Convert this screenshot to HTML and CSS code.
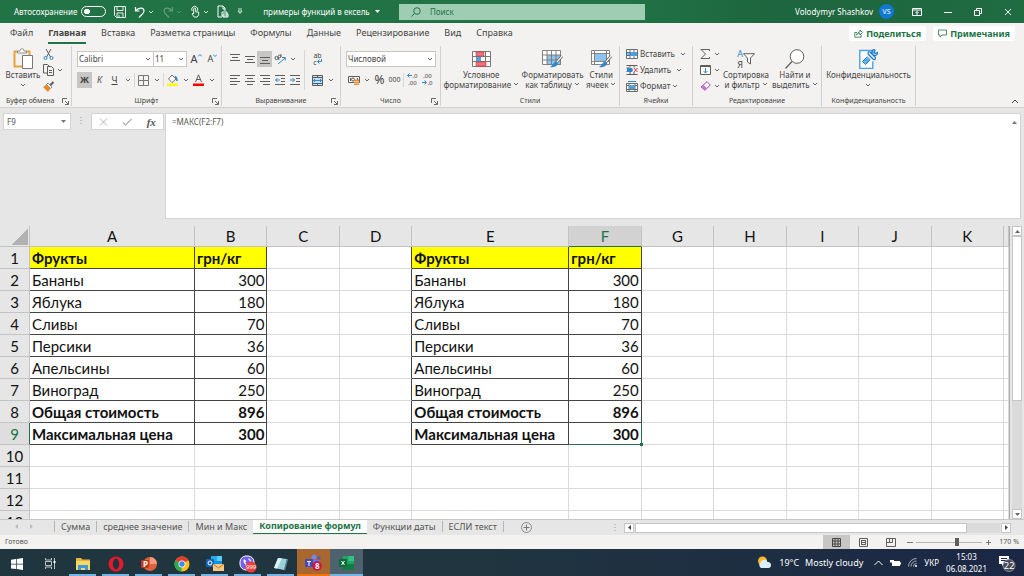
FILE: index.html
```html
<!DOCTYPE html>
<html lang="ru">
<head>
  <meta charset="UTF-8">
  <meta name="viewport" content="width=device-width, initial-scale=1.0">
  <title>примеры функций в ексель</title>
  <link rel="stylesheet" href="styles.css">
</head>
<body>
  <!-- Shared icons -->
  <svg class="defs" aria-hidden="true">
    <symbol id="chev" viewBox="0 0 6 4"><path d="M1 1l2 2 2-2" fill="none" stroke="currentColor"/></symbol>
    <symbol id="launch" viewBox="0 0 7 7"><path d="M.5 5V.5H5M3 3l3 3M6.500 3v3.500H3" fill="none" stroke="currentColor" stroke-width=".8"/></symbol>
    <symbol id="brush" viewBox="0 0 12 12"><path d="M11 1L6 7" stroke="#605e5c" stroke-width="2.600"/><path d="M11 1L6 7" stroke="#fff" stroke-width="1.200"/><path d="M6 6c-3 0-3 4-6 5 4 1 8-1 7-4z" fill="#2f87cf"/></symbol>
  </svg>

  <!-- Title bar -->
  <header class="titlebar">
    <div class="quick">
      <label for="autosave">Автосохранение</label>
      <input type="checkbox" id="autosave" class="switch">
      <button aria-label="Сохранить"><svg width="12" height="12" viewBox="0 0 12 12"><path d="M.5.5h11v11h-9l-2-2zM3 .5v4h6v-4M3 11V7h6v4M5 9v2" fill="none" stroke="#fff" stroke-width=".9"/></svg></button>
      <button aria-label="Отменить"><svg width="12" height="12" viewBox="0 0 12 12"><path d="M1.500 1v4h4M1.500 5C5 1 10 1.500 10 5c0 3-3 4-5 6.500" fill="none" stroke="#fff" stroke-width="1.200"/></svg><svg class="chev"><use href="#chev"/></svg></button>
      <button class="off" aria-label="Повторить"><svg width="12" height="12" viewBox="0 0 12 12"><path d="M10.500 1v4h-4M10.500 5C7 1 2 1.500 2 5c0 3 3 4 5 6.500" fill="none" stroke="#fff" stroke-width="1.200"/></svg><svg class="chev"><use href="#chev"/></svg></button>
      <button aria-label="Режим касания"><svg width="11" height="13" viewBox="0 0 11 13"><path d="M2.200 6a3 3 0 1 1 5 0M3.700 9V4a1 1 0 0 1 2 0v3h3v3l-1.500 2h-3L2 9l1-1z" fill="none" stroke="#fff" stroke-width=".9"/></svg><svg class="chev"><use href="#chev"/></svg></button>
      <button aria-label="Печать"><svg width="12" height="13" viewBox="0 0 12 13"><path d="M5 12H1V1h5l2 2v3M6 1v3h2M5 7h5v4H5zM6 9h5v3H6z" fill="none" stroke="#fff"/></svg></button>
      <button aria-label="Настроить панель"><svg width="6" height="7" viewBox="0 0 6 7"><path d="M1 1h4M1 3h4L3 5.500z" fill="none" stroke="#fff" stroke-width=".8"/></svg></button>
    </div>
    <button class="doc-name">примеры функций в ексель <svg width="5" height="3" viewBox="0 0 5 3"><path d="M0 0h5L2.500 3z" fill="#fff"/></svg></button>
    <label class="search">
      <svg width="10" height="10" viewBox="0 0 10 10"><circle cx="6" cy="4" r="3.300" fill="none" stroke="#217346"/><path d="M3.500 6.500L.5 9.500" stroke="#217346"/></svg>
      <input type="text" placeholder="Поиск" aria-label="Поиск">
    </label>
    <div class="account">
      <span>Volodymyr Shashkov</span>
      <span class="avatar">VS</span>
      <button aria-label="Параметры ленты"><svg width="10" height="8" viewBox="0 0 10 8"><path d="M.5.5h9v7h-9zM1 2h8M5 7V3.500M3.500 5L5 3.500 6.500 5" fill="none" stroke="#fff"/></svg></button>
      <button aria-label="Свернуть"><svg width="8" height="8" viewBox="0 0 8 8"><path d="M0 4.500h8" stroke="#fff"/></svg></button>
      <button aria-label="Развернуть"><svg width="8" height="8" viewBox="0 0 8 8"><path d="M.5 2.500h5v5h-5zM2.500 2V.5h5v5H6" fill="none" stroke="#fff"/></svg></button>
      <button aria-label="Закрыть"><svg width="8" height="8" viewBox="0 0 8 8"><path d="M1 1l6 6M7 1L1 7" stroke="#fff"/></svg></button>
    </div>
  </header>

  <!-- Ribbon tabs -->
  <nav class="menu">
    <button>Файл</button>
    <button class="current">Главная</button>
    <button>Вставка</button>
    <button>Разметка страницы</button>
    <button>Формулы</button>
    <button>Данные</button>
    <button>Рецензирование</button>
    <button>Вид</button>
    <button>Справка</button>
    <div class="menu-right">
      <button class="pill"><svg width="9" height="9" viewBox="0 0 9 9"><path d="M3 3.500H.8v4.700h6.400V6M2.500 6c.5-2 2-3 3.500-3V1l2.500 2.500L6 6V4.500C4.500 4.500 3.500 5 2.500 6z" fill="none" stroke="#217346" stroke-width=".8"/></svg>Поделиться</button>
      <button class="pill"><svg width="9" height="9" viewBox="0 0 9 9"><path d="M.5 1h8v5H4L2 8V6H.5z" fill="none" stroke="#217346" stroke-width=".8"/></svg>Примечания</button>
    </div>
  </nav>

  <!-- Ribbon -->
  <section class="ribbon">
    <div class="group clipboard">
      <div class="group-body">
        <button class="big">
          <span class="pic"><svg width="20" height="21" viewBox="0 0 20 21"><path d="M5 3.500H1.500v15H9M13 3.500h3.500V7" fill="none" stroke="#e8a33d" stroke-width="2"/><path d="M4.500 5V3h2.500c0-3 4-3 4 0h2.500v2z" fill="#fff" stroke="#797775" stroke-width=".8"/><path d="M9.500 7.500h10v13h-10z" fill="#fff" stroke="#797775"/></svg></span>
          <span>Вставить</span>
          <svg class="chev"><use href="#chev"/></svg>
        </button>
        <div class="stack">
          <button aria-label="Вырезать"><svg width="11" height="11" viewBox="0 0 11 11"><path d="M3 0l4.500 8M8 0L3.500 8" stroke="#605e5c" fill="none"/><circle cx="2.500" cy="9" r="1.500" fill="none" stroke="#2f87cf"/><circle cx="8.500" cy="9" r="1.500" fill="none" stroke="#2f87cf"/></svg></button>
          <button aria-label="Копировать"><svg width="11" height="12" viewBox="0 0 11 12"><path d="M4 9H.5V.5h4L6 2M4.500 2.500h4l2 2v7h-6zM6 6.500h3M6 8.500h3" fill="none" stroke="#605e5c"/></svg><svg class="chev"><use href="#chev"/></svg></button>
          <button aria-label="Формат по образцу"><svg width="11" height="11" viewBox="0 0 11 11"><path d="M10.500 1L7 4.500" stroke="#605e5c" stroke-width="2"/><path d="M5 2l4 4-1.500 1.500-4-4z" fill="#fff" stroke="#605e5c" stroke-width=".7"/><path d="M3.500 3.500l4 4L5 11 0 6z" fill="#e98b2c"/></svg></button>
        </div>
      </div>
      <div class="group-foot"><span>Буфер обмена</span><button class="launch" aria-label="Буфер обмена"><svg width="7" height="7"><use href="#launch"/></svg></button></div>
    </div>

    <div class="group font">
      <div class="group-body rows">
        <div class="row">
          <span class="combo combo-font"><select aria-label="Шрифт"><option>Calibri</option></select><svg class="chev"><use href="#chev"/></svg></span>
          <span class="combo combo-size"><select aria-label="Размер"><option>11</option></select><svg class="chev"><use href="#chev"/></svg></span>
          <button class="ib grow" aria-label="Увеличить шрифт">A<svg width="4" height="3" viewBox="0 0 4 3"><path d="M0 2.500l2-2 2 2" fill="none" stroke="#2f87cf"/></svg></button>
          <button class="ib shrink" aria-label="Уменьшить шрифт">A<svg width="4" height="3" viewBox="0 0 4 3"><path d="M0 .5l2 2 2-2" fill="none" stroke="#2f87cf"/></svg></button>
        </div>
        <div class="row">
          <button class="ib on"><b>Ж</b></button>
          <button class="ib"><i>К</i></button>
          <button class="ib"><u>Ч</u></button>
          <button class="drop" aria-label="Подчёркивание"><svg class="chev"><use href="#chev"/></svg></button>
          <span class="sep"></span>
          <button class="ib" aria-label="Границы"><svg width="11" height="11" viewBox="0 0 11 11"><path d="M.5.5h10v10H.5zM5.500.5v10M.5 5.500h10" fill="none" stroke="#797775"/></svg></button>
          <button class="drop" aria-label="Границы"><svg class="chev"><use href="#chev"/></svg></button>
          <span class="sep"></span>
          <button class="ib" aria-label="Цвет заливки"><svg width="12" height="12" viewBox="0 0 12 12"><path d="M5 1l4 4-4 3.500L1.500 5z" fill="#fff" stroke="#605e5c" stroke-width=".9"/><path d="M8 2.500c2 1 2 3 2 4.500" stroke="#2f87cf" stroke-width="1.500" fill="none"/><path d="M0 9.500h11V12H0z" fill="#ff0"/></svg></button>
          <button class="drop" aria-label="Цвет заливки"><svg class="chev"><use href="#chev"/></svg></button>
          <button class="ib" aria-label="Цвет шрифта"><svg width="12" height="12" viewBox="0 0 12 12"><path d="M2.500 8L5.500.8 8.500 8M3.500 5.500h4" fill="none" stroke="#605e5c"/><path d="M0 9.500h11V12H0z" fill="#f00"/></svg></button>
          <button class="drop" aria-label="Цвет шрифта"><svg class="chev"><use href="#chev"/></svg></button>
        </div>
      </div>
      <div class="group-foot"><span>Шрифт</span><button class="launch" aria-label="Шрифт"><svg width="7" height="7"><use href="#launch"/></svg></button></div>
    </div>

    <div class="group align">
      <div class="group-body">
        <div class="rows">
          <div class="row">
            <button class="ib" aria-label="По верхнему краю"><svg width="10" height="10" viewBox="0 0 10 10"><path d="M0 .5h10M2 3.500h6M0 6.500h10" stroke="#605e5c"/></svg></button>
            <button class="ib" aria-label="По середине"><svg width="10" height="10" viewBox="0 0 10 10"><path d="M0 2.500h10M2 5.500h6M0 8.500h10" stroke="#605e5c"/></svg></button>
            <button class="ib on" aria-label="По нижнему краю"><svg width="10" height="10" viewBox="0 0 10 10"><path d="M0 3.500h10M2 6.500h6M0 9.500h10" stroke="#605e5c"/></svg></button>
            <button class="ib" aria-label="Ориентация"><svg width="12" height="11" viewBox="0 0 12 11"><circle cx="2.500" cy="4" r="1.600" fill="none" stroke="#605e5c"/><circle cx="5.500" cy="2.500" r="1.400" fill="none" stroke="#605e5c"/><path d="M4 3l1 3M7 0v3" stroke="#605e5c"/><path d="M4 10l7-6M8 3.500h3.200v3" fill="none" stroke="#2f87cf"/></svg></button>
            <button class="drop" aria-label="Ориентация"><svg class="chev"><use href="#chev"/></svg></button>
          </div>
          <div class="row">
            <button class="ib" aria-label="По левому краю"><svg width="10" height="10" viewBox="0 0 10 10"><path d="M0 .5h10M0 3.500h7M0 6.500h10M0 9.500h7" stroke="#605e5c"/></svg></button>
            <button class="ib" aria-label="По центру"><svg width="10" height="10" viewBox="0 0 10 10"><path d="M0 .5h10M2 3.500h6M0 6.500h10M2 9.500h6" stroke="#605e5c"/></svg></button>
            <button class="ib" aria-label="По правому краю"><svg width="10" height="10" viewBox="0 0 10 10"><path d="M0 .5h10M3 3.500h7M0 6.500h10M3 9.500h7" stroke="#605e5c"/></svg></button>
            <button class="ib" aria-label="Уменьшить отступ"><svg width="10" height="10" viewBox="0 0 10 10"><path d="M0 .5h10M6 3.500h4M6 6.500h4M0 9.500h10" stroke="#605e5c"/><path d="M5 5H.5M2.500 3L.5 5l2 2" fill="none" stroke="#2f87cf"/></svg></button>
            <button class="ib" aria-label="Увеличить отступ"><svg width="10" height="10" viewBox="0 0 10 10"><path d="M0 .5h10M6 3.500h4M6 6.500h4M0 9.500h10" stroke="#605e5c"/><path d="M0 5h4.500M2.500 3l2 2-2 2" fill="none" stroke="#2f87cf"/></svg></button>
          </div>
        </div>
        <span class="sep tall"></span>
        <div class="rows">
          <div class="row">
            <button class="ib wrap" aria-label="Переносить текст"><span>ab</span><span>c<svg width="5" height="5" viewBox="0 0 5 5"><path d="M4.500 0v2.500H.5M2.500.5l-2 2 2 2" fill="none" stroke="#2f87cf"/></svg></span></button>
          </div>
          <div class="row">
            <button class="ib" aria-label="Объединить"><svg width="11" height="11" viewBox="0 0 11 11"><path d="M.5.5h10v10H.5z" fill="#bfe0f7" stroke="#605e5c"/><path d="M.5 2.500h10M.5 8.500h10M5.500.5v2M5.500 8.500v2" stroke="#605e5c"/><path d="M1.500 5.500h8M3 4L1.500 5.500 3 7M8 4l1.500 1.500L8 7" fill="none" stroke="#2f87cf"/></svg></button>
            <button class="drop" aria-label="Объединить"><svg class="chev"><use href="#chev"/></svg></button>
          </div>
        </div>
      </div>
      <div class="group-foot"><span>Выравнивание</span><button class="launch" aria-label="Выравнивание"><svg width="7" height="7"><use href="#launch"/></svg></button></div>
    </div>

    <div class="group number">
      <div class="group-body rows">
        <div class="row">
          <span class="combo combo-number"><select aria-label="Числовой формат"><option>Числовой</option></select><svg class="chev"><use href="#chev"/></svg></span>
        </div>
        <div class="row">
          <button class="ib" aria-label="Финансовый формат"><svg width="12" height="11" viewBox="0 0 12 11"><path d="M.5 1.500h11v6H.5z" fill="none" stroke="#605e5c"/><circle cx="5" cy="4.500" r="1.500" fill="none" stroke="#605e5c"/><path d="M2.500 3v3M9.500 3v3" stroke="#605e5c"/><path d="M6 4.500h5V10H6z" fill="#e98b2c"/><path d="M6 6.500h5M6 8.500h5" stroke="#fff" stroke-width=".5"/></svg></button>
          <button class="drop" aria-label="Финансовый формат"><svg class="chev"><use href="#chev"/></svg></button>
          <button class="ib percent">%</button>
          <button class="ib zeros">000</button>
          <span class="sep"></span>
          <button class="ib decimals" aria-label="Увеличить разрядность"><span><svg width="5" height="5" viewBox="0 0 5 5"><path d="M5 2.500H.5M2.500.5l-2 2 2 2" fill="none" stroke="#2f87cf"/></svg>,0</span><span>,00</span></button>
          <button class="ib decimals" aria-label="Уменьшить разрядность"><span>,00</span><span><svg width="5" height="5" viewBox="0 0 5 5"><path d="M0 2.500h4.500M2.500.5l2 2-2 2" fill="none" stroke="#2f87cf"/></svg>,0</span></button>
        </div>
      </div>
      <div class="group-foot"><span>Число</span><button class="launch" aria-label="Число"><svg width="7" height="7"><use href="#launch"/></svg></button></div>
    </div>

    <div class="group styles">
      <div class="group-body spread">
        <button class="big">
          <span class="pic"><svg width="19" height="16" viewBox="0 0 19 16"><path d="M.5.5h18v15H.5zM.5 5.500h18M.5 10.500h18M4.500.5v15M13.500.5v15" fill="#fff" stroke="#797775"/><path d="M4 1h8v4H4zM4 11h10v4H4z" fill="#f4737b" stroke="#d13438" stroke-width=".6"/><path d="M4 6h5v4H4z" fill="#4ba0e0"/></svg></span>
          <span>Условное</span>
          <span>форматирование <svg class="chev"><use href="#chev"/></svg></span>
        </button>
        <button class="big">
          <span class="pic"><svg width="21" height="18" viewBox="0 0 21 18"><path d="M.5.5h18v14H.5z" fill="#fff"/><path d="M5 5h14v10H5z" fill="#8cc4ee"/><path d="M.5.5h18v14H.5zM.5 5h18M.5 10h18M5 .5v14M9.500.5v14M14 .5v14" fill="none" stroke="#797775" stroke-width=".9"/><use href="#brush" x="8" y="5" width="13" height="13"/></svg></span>
          <span>Форматировать</span>
          <span>как таблицу <svg class="chev"><use href="#chev"/></svg></span>
        </button>
        <button class="big">
          <span class="pic"><svg width="21" height="18" viewBox="0 0 21 18"><path d="M.5.5h18v14H.5z" fill="#fff"/><path d="M4 4h12v7H4z" fill="#8cc4ee"/><path d="M.5.5h18v14H.5zM.5 3.500h18M.5 11.500h18M3.500.5v14M15.500.5v14" fill="none" stroke="#797775" stroke-width=".9"/><use href="#brush" x="8" y="5" width="13" height="13"/></svg></span>
          <span>Стили</span>
          <span>ячеек <svg class="chev"><use href="#chev"/></svg></span>
        </button>
      </div>
      <div class="group-foot"><span>Стили</span></div>
    </div>

    <div class="group cells">
      <div class="group-body list">
        <button><svg width="12" height="10" viewBox="0 0 12 10"><path d="M.5.5h11v9H.5zM.5 3.500h11M.5 6.500h11M4 .5v9M8 .5v9" fill="#fff" stroke="#605e5c" stroke-width=".9"/><path d="M4 3h7v4H4z" fill="#4ba0e0"/><path d="M5 5H0M2 3L0 5l2 2" fill="none" stroke="#1979ca"/></svg>Вставить<svg class="chev far"><use href="#chev"/></svg></button>
        <button><svg width="12" height="10" viewBox="0 0 12 10"><path d="M.5.5h11M.5 9.500h11M.5 3h3M.5 6.500h3M4 .5v2M8 .5v2M4 7v2.500M8 7v2.500" fill="none" stroke="#605e5c"/><path d="M1 3h5l1 2-1 2H1z" fill="#2f87cf"/><path d="M8 3l3.500 4M11.500 3L8 7" stroke="#e03c3c"/></svg>Удалить<svg class="chev far"><use href="#chev"/></svg></button>
        <button><svg width="12" height="11" viewBox="0 0 12 11"><path d="M.5 2.500h11v8H.5zM.5 4.500h11M.5 8.500h11M3 2v9M9 2v9" fill="#fff" stroke="#605e5c" stroke-width=".9"/><path d="M3 4h6v4H3z" fill="#4ba0e0"/><path d="M2 .5h8" stroke="#2f87cf"/></svg>Формат<svg class="chev"><use href="#chev"/></svg></button>
      </div>
      <div class="group-foot"><span>Ячейки</span></div>
    </div>

    <div class="group editing">
      <div class="group-body">
        <div class="list">
          <button aria-label="Сумма"><svg width="11" height="10" viewBox="0 0 11 10"><path d="M9.500 2V.5H1L5.500 5 1 9.500h8.500V8" fill="none" stroke="#605e5c"/></svg><svg class="chev"><use href="#chev"/></svg></button>
          <button aria-label="Заполнить"><svg width="11" height="10" viewBox="0 0 11 10"><path d="M.5.5h10v9H.5zM.5 1.500h10" fill="#fff" stroke="#605e5c"/><path d="M5.500 3v5M3.500 6l2 2 2-2" fill="none" stroke="#2f87cf"/></svg><svg class="chev"><use href="#chev"/></svg></button>
          <button aria-label="Очистить"><svg width="11" height="10" viewBox="0 0 11 10"><path d="M7 .7L10.300 4 5 9.300 1 6z" fill="#fff" stroke="#a33fb5"/><path d="M3.500 3.700L7 7.300 5 9.300 1 6z" fill="#c178d0"/></svg><svg class="chev"><use href="#chev"/></svg></button>
        </div>
        <button class="big">
          <span class="pic sort"><span><span class="blue">А</span><span>Я</span></span><svg width="12" height="12" viewBox="0 0 12 12"><path d="M.5.7h11L7.500 5v6l-3-2V5z" fill="#fff" stroke="#605e5c"/></svg></span>
          <span>Сортировка</span>
          <span>и фильтр <svg class="chev"><use href="#chev"/></svg></span>
        </button>
        <button class="big">
          <span class="pic"><svg width="20" height="20" viewBox="0 0 20 20"><circle cx="12" cy="7.500" r="6.800" fill="#fff" stroke="#605e5c"/><path d="M7 12.500L.5 19.500" stroke="#605e5c" stroke-width="1.200"/></svg></span>
          <span>Найти и</span>
          <span>выделить <svg class="chev"><use href="#chev"/></svg></span>
        </button>
      </div>
      <div class="group-foot"><span>Редактирование</span></div>
    </div>

    <div class="group privacy">
      <div class="group-body spread">
        <button class="big">
          <span class="pic"><svg width="19" height="20" viewBox="0 0 19 20"><path d="M.8 1.500h13v18H.8z" fill="#fff" stroke="#4ba0e0" stroke-width="1.400"/><path d="M3.500 12.500l5-5 3 3-5 5z" fill="#8cc4ee" stroke="#1979ca"/><path d="M5 12.500l4-3M6.500 14l3.500-3.500" stroke="#1979ca" stroke-width=".8"/><path d="M8.500 4l7 7" stroke="#f3f2f1" stroke-width="5"/><path d="M9 5l5.500 5.500M11 3l5.500 5.500M9 5c0-2 1-2.500 2-2M14.500 10.500c2 .5 2-1 2-2M13 4.500c-1-3 2-5 3-3l-1 2 1 1 2.300-1c.5 2-1.300 3.500-3.300 2.500" fill="none" stroke="#1979ca" stroke-width="1.200"/></svg></span>
          <span>Конфиденциальность</span>
          <svg class="chev"><use href="#chev"/></svg>
        </button>
      </div>
      <div class="group-foot"><span>Конфиденциальность</span></div>
    </div>
    <button class="collapse" aria-label="Свернуть ленту"><svg width="8" height="5" viewBox="0 0 8 5"><path d="M1 4l3-3 3 3" fill="none" stroke="#444"/></svg></button>
  </section>

  <!-- Formula bar -->
  <section class="formula-bar">
    <span class="name-box"><input type="text" value="F9" aria-label="Имя"><svg width="5" height="3" viewBox="0 0 5 3"><path d="M0 0h5L2.500 3z" fill="#777"/></svg></span>
    <svg class="grip" width="2" height="9" viewBox="0 0 2 9"><path d="M1 0v9" stroke="#999" stroke-dasharray="1 2"/></svg>
    <span class="fx">
      <button aria-label="Отмена"><svg width="9" height="8" viewBox="0 0 9 8"><path d="M1 .5l7 7M8 .5l-7 7" stroke="#b5b5b5"/></svg></button>
      <button aria-label="Ввод"><svg width="10" height="8" viewBox="0 0 10 8"><path d="M1 4.500l2.500 2.500L9.500 1" fill="none" stroke="#b5b5b5" stroke-width="1.300"/></svg></button>
      <button class="fx-btn">fx</button>
    </span>
    <div class="formula">
      <textarea aria-label="Строка формул">=МАКС(F2:F7)</textarea>
      <svg width="5" height="3" viewBox="0 0 5 3"><path d="M0 3h5L2.500 0z" fill="#777"/></svg>
    </div>
  </section>

  <!-- Sheet -->
  <main class="sheet">
    <div class="grid-wrap">
      <table class="grid">
        <colgroup>
          <col class="col-head"><col class="col-a"><col><col><col><col class="col-e"><col><col><col><col><col><col><col class="col-rest">
        </colgroup>
        <thead>
          <tr><th class="corner"></th><th>A</th><th>B</th><th>C</th><th>D</th><th>E</th><th class="sel">F</th><th>G</th><th>H</th><th>I</th><th>J</th><th>K</th><th></th></tr>
        </thead>
        <tbody>
          <tr class="title"><th>1</th><td class="d">Фрукты</td><td class="d">грн/кг</td><td></td><td class="edge"></td><td class="d">Фрукты</td><td class="d">грн/кг</td><td></td><td></td><td></td><td></td><td></td><td></td></tr>
          <tr><th>2</th><td class="d">Бананы</td><td class="d n">300</td><td></td><td class="edge"></td><td class="d">Бананы</td><td class="d n">300</td><td></td><td></td><td></td><td></td><td></td><td></td></tr>
          <tr><th>3</th><td class="d">Яблука</td><td class="d n">180</td><td></td><td class="edge"></td><td class="d">Яблука</td><td class="d n">180</td><td></td><td></td><td></td><td></td><td></td><td></td></tr>
          <tr><th>4</th><td class="d">Сливы</td><td class="d n">70</td><td></td><td class="edge"></td><td class="d">Сливы</td><td class="d n">70</td><td></td><td></td><td></td><td></td><td></td><td></td></tr>
          <tr><th>5</th><td class="d">Персики</td><td class="d n">36</td><td></td><td class="edge"></td><td class="d">Персики</td><td class="d n">36</td><td></td><td></td><td></td><td></td><td></td><td></td></tr>
          <tr><th>6</th><td class="d">Апельсины</td><td class="d n">60</td><td></td><td class="edge"></td><td class="d">Апельсины</td><td class="d n">60</td><td></td><td></td><td></td><td></td><td></td><td></td></tr>
          <tr><th>7</th><td class="d">Виноград</td><td class="d n">250</td><td></td><td class="edge"></td><td class="d">Виноград</td><td class="d n">250</td><td></td><td></td><td></td><td></td><td></td><td></td></tr>
          <tr class="total"><th>8</th><td class="d">Общая стоимость</td><td class="d n">896</td><td></td><td class="edge"></td><td class="d">Общая стоимость</td><td class="d n">896</td><td></td><td></td><td></td><td></td><td></td><td></td></tr>
          <tr class="total"><th class="sel">9</th><td class="d">Максимальная цена</td><td class="d n">300</td><td></td><td class="edge"></td><td class="d">Максимальная цена</td><td class="d n active">300</td><td></td><td></td><td></td><td></td><td></td><td></td></tr>
          <tr><th>10</th><td></td><td></td><td></td><td></td><td></td><td></td><td></td><td></td><td></td><td></td><td></td><td></td></tr>
          <tr><th>11</th><td></td><td></td><td></td><td></td><td></td><td></td><td></td><td></td><td></td><td></td><td></td><td></td></tr>
          <tr><th>12</th><td></td><td></td><td></td><td></td><td></td><td></td><td></td><td></td><td></td><td></td><td></td><td></td></tr>
          <tr><th>13</th><td></td><td></td><td></td><td></td><td></td><td></td><td></td><td></td><td></td><td></td><td></td><td></td></tr>
        </tbody>
      </table>
    </div>
    <div class="vscroll">
      <button aria-label="Вверх"><svg width="5" height="3" viewBox="0 0 5 3"><path d="M0 3h5L2.500 0z" fill="#666"/></svg></button>
      <span class="vthumb"></span>
      <span class="vtrack"></span>
      <button aria-label="Вниз"><svg width="5" height="3" viewBox="0 0 5 3"><path d="M0 0h5L2.500 3z" fill="#666"/></svg></button>
    </div>
  </main>

  <!-- Sheet tabs -->
  <section class="sheet-bar">
    <div class="sheet-nav">
      <svg width="3" height="5" viewBox="0 0 3 5"><path d="M3 0v5L0 2.500z" fill="#bbb"/></svg>
      <svg width="3" height="5" viewBox="0 0 3 5"><path d="M0 0v5l3-2.500z" fill="#bbb"/></svg>
    </div>
    <button class="tab">Сумма</button>
    <button class="tab">среднее значение</button>
    <button class="tab last">Мин и Макс</button>
    <button class="tab open">Копирование формул</button>
    <button class="tab">Функции даты</button>
    <button class="tab">ЕСЛИ текст</button>
    <button class="add" aria-label="Новый лист"><svg width="11" height="11" viewBox="0 0 11 11"><circle cx="5.500" cy="5.500" r="5" fill="none" stroke="#777" stroke-width=".8"/><path d="M5.500 2.500v6M2.500 5.500h6" stroke="#777"/></svg></button>
    <div class="hscroll">
      <svg class="dots" width="2" height="8" viewBox="0 0 2 8"><path d="M1 0v8" stroke="#999" stroke-dasharray="1 2"/></svg>
      <button aria-label="Влево"><svg width="3" height="5" viewBox="0 0 3 5"><path d="M3 0v5L0 2.500z" fill="#444"/></svg></button>
      <span class="hthumb"></span>
      <span class="htrack"></span>
      <button aria-label="Вправо"><svg width="3" height="5" viewBox="0 0 3 5"><path d="M0 0v5l3-2.500z" fill="#444"/></svg></button>
    </div>
  </section>

  <!-- Status bar -->
  <footer class="status">
    <span>Готово</span>
    <div class="view">
      <button class="on" aria-label="Обычный"><svg width="9" height="9" viewBox="0 0 9 9"><path d="M.5.5h8v8h-8zM.5 3h8M.5 6h8M3 .5v8M6 .5v8" fill="none" stroke="#444"/></svg></button>
      <button aria-label="Разметка страницы"><svg width="9" height="9" viewBox="0 0 9 9"><path d="M.5.5h8v8h-8zM2.500 2v5M6.500 2v5M3 2.500h3M3 4.500h3M3 6.500h3" fill="none" stroke="#605e5c"/></svg></button>
      <button aria-label="Страничный"><svg width="10" height="9" viewBox="0 0 10 9"><path d="M.5.5h9v8h-9zM3.500.5v4M6.500.5v4M.5 4.500h6" fill="none" stroke="#605e5c"/></svg></button>
    </div>
    <button class="zoom-btn" aria-label="Уменьшить"><svg width="6" height="6" viewBox="0 0 6 6"><path d="M0 3.500h6" stroke="#777"/></svg></button>
    <input type="range" class="zoom" min="0" max="100" value="63" aria-label="Масштаб">
    <button class="zoom-btn" aria-label="Увеличить"><svg width="5" height="5" viewBox="0 0 5 5"><path d="M0 2.500h5M2.500 0v5" stroke="#777"/></svg></button>
    <span class="zoom-value">170 %</span>
  </footer>

  <!-- Taskbar -->
  <div class="taskbar">
    <button class="task" aria-label="Пуск"><svg width="12" height="12" viewBox="0 0 12 12"><path d="M0 1.700L5 1v4.700H0zM5.700.9L12 0v5.700H5.700zM0 6.400h5v4.700l-5-.7zM5.700 6.400H12V12l-6.300-.9z" fill="#fff"/></svg></button>
    <button class="task" aria-label="Представление задач"><svg width="12" height="11" viewBox="0 0 12 11"><path d="M1.500 0v2h6V0M1.500 11V9h6v2M1.500 3.500h6v4h-6zM10.500 0v11" fill="none" stroke="#ccd3d6" stroke-width=".9"/><path d="M9.500 3h2v2h-2z" fill="#fff"/></svg></button>
    <button class="task run" aria-label="Проводник"><svg width="16" height="14" viewBox="0 0 16 14"><path d="M1 1h5l1.500 1.500H15V13H1z" fill="#e8b33a"/><path d="M1 4h14v9H1z" fill="#fbd866"/><path d="M3 13V8h10v5h-3v-2H6v2z" fill="#3f97dc"/></svg></button>
    <button class="task run" aria-label="Opera"><svg width="16" height="16" viewBox="0 0 16 16"><circle cx="8" cy="8" r="7.500" fill="#e8192c"/><ellipse cx="8" cy="8" rx="3.200" ry="5.400" fill="#20333e"/></svg></button>
    <button class="task run" aria-label="PowerPoint"><svg width="16" height="16" viewBox="0 0 16 16"><circle cx="9" cy="8" r="7" fill="#e0603c"/><path d="M9 1a7 7 0 0 1 7 7H9z" fill="#f59a7b"/><rect y="4" width="8" height="8" rx="1" fill="#b93a1d"/><text x="2" y="11" class="badge-text">P</text></svg></button>
    <button class="task run" aria-label="Chrome"><svg width="16" height="16" viewBox="0 0 16 16"><circle cx="8" cy="8" r="7.500" fill="#fbc116"/><path d="M8 8L1.500 4.200a7.500 7.500 0 0 1 13 0z" fill="#e33b2e"/><path d="M8 8L1.500 4.200a7.500 7.500 0 0 0 5.800 11.300z" fill="#2da94f"/><circle cx="8" cy="8" r="3.500" fill="#fff"/><circle cx="8" cy="8" r="2.700" fill="#4285f4"/></svg></button>
    <button class="task run" aria-label="Outlook"><svg width="18" height="17" viewBox="0 0 18 17"><path d="M5 1h11v11H5z" fill="#1490df"/><path d="M10.500 1H16v5h-5.500z" fill="#50d0fb"/><path d="M5 1h5.500v5H5z" fill="#28a8ea"/><rect y="4" width="8" height="8" rx="1" fill="#0f64b8"/><circle cx="4" cy="8" r="2" fill="none" stroke="#fff"/><path d="M7 9h11v7H7z" fill="#f6c884"/><path d="M7 9l5.500 4L18 9" fill="none" stroke="#b97a2c"/></svg></button>
    <button class="task run" aria-label="Viber"><svg width="18" height="18" viewBox="0 0 18 18"><rect x="1" y="1" width="14" height="14" rx="6" fill="#7360f2" stroke="#fff"/><path d="M5 4.500c-1 3 2 6 5 7l1-1.500-1.800-1L8 10C7 9 6 8 6 7l1-1zM9 4c2 0 3 1 3 3" fill="#fff" stroke="#fff" stroke-width=".6"/><circle cx="12" cy="12" r="5.500" fill="#f23c3c"/><text x="7" y="14" class="badge-tiny">999</text></svg></button>
    <button class="task run" aria-label="Блокнот"><svg width="16" height="16" viewBox="0 0 16 16"><path d="M5 2l9 1-3 11-10-2z" fill="#9bd0dc"/><path d="M5 2l4 .5L4 12.500 1 12z" fill="#dff3f6"/><path d="M14 3l1 .5-3 11-1-.5z" fill="#5c8c97"/></svg></button>
    <button class="task run alert" aria-label="Teams"><svg width="18" height="18" viewBox="0 0 18 18"><circle cx="9" cy="3" r="2.500" fill="#7b83eb"/><circle cx="14" cy="4" r="1.700" fill="#5059c9"/><path d="M5 6h10v6c-2 4-8 4-10 0z" fill="#6a72dc"/><rect y="5" width="8" height="8" rx="1" fill="#444bb3"/><path d="M2 7.500h4M4 7.500V12" stroke="#fff"/><circle cx="12" cy="12" r="4.800" fill="#d0143c"/><text x="10" y="15" class="badge-text">8</text></svg></button>
    <button class="task run front" aria-label="Excel"><svg width="16" height="16" viewBox="0 0 16 16"><path d="M4 1h11v14H4z" fill="#21a366"/><path d="M9.500 1H15v5H9.500z" fill="#33c481"/><path d="M9.500 9H15v6H4v-4z" fill="#107c41"/><rect y="4" width="8" height="8" rx="1" fill="#0e6b38"/><path d="M2.500 6l3 4M5.500 6l-3 4" stroke="#fff"/></svg></button>

    <div class="tray">
      <svg width="15" height="13" viewBox="0 0 15 13"><circle cx="5.500" cy="5" r="4.500" fill="#fbb925"/><path d="M4 12a3.500 3.500 0 0 1 0-6c1-3 5.500-3 6.500 0 4-.5 5 5.500 1 6z" fill="#dcedfb"/></svg>
      <span class="weather"><span>19°C</span><span>Mostly cloudy</span></span>
      <svg width="9" height="6" viewBox="0 0 9 6"><path d="M.5 5l4-4 4 4" fill="none" stroke="#fff"/></svg>
      <svg width="11" height="8" viewBox="0 0 11 8"><path d="M2 2h8v5H2z" fill="#fff"/><path d="M10 3.500h1v2h-1zM0 1h4v2.500H0z" fill="#fff"/></svg>
      <svg width="9" height="9" viewBox="0 0 9 9"><path d="M.5 8.500a8 8 0 0 1 8-8M3 8.500A5.500 5.500 0 0 1 8.500 3M5.500 8.500a3 3 0 0 1 3-3" fill="none" stroke="#b9c1cc" stroke-width=".9"/><circle cx="8" cy="8" r="1" fill="#fff"/></svg>
      <span>УКР</span>
      <span class="clock"><span>15:03</span><span>06.08.2021</span></span>
      <button class="notice" aria-label="Уведомления"><svg width="18" height="18" viewBox="0 0 18 18"><path d="M1 2h10v8H6l-2 2v-2H1z" fill="#fff"/><path d="M3 4.500h6M3 6.500h6" stroke="#1c2a44"/><circle cx="11" cy="11.500" r="6" fill="#444b55" stroke="#9aa0a8" stroke-width=".8"/><text x="6" y="15" class="badge-count">22</text></svg></button>
    </div>
  </div>
</body>
</html>
```
FILE: styles.css
```css
* {
  box-sizing: border-box;
}

body {
  margin: 0;
  height: 100vh;
  display: flex;
  flex-direction: column;
  overflow: hidden;
  background: #e6e6e6;
  color: #444;
  font-family: "Noto Sans", "Open Sans", sans-serif;
  font-size: 8px;
  line-height: 10px;
}

button, input, select, textarea {
  margin: 0;
  padding: 0;
  border: none;
  border-radius: 0;
  background: none;
  color: inherit;
  font: inherit;
  outline: none;
}

button {
  display: flex;
  align-items: center;
  justify-content: center;
  white-space: nowrap;
}

svg {
  flex: none;
}

.defs {
  position: absolute;
  width: 0;
  height: 0;
}

.chev {
  width: 6px;
  height: 4px;
  opacity: 0.8;
}

/* Title bar */
.titlebar {
  flex: none;
  height: 23px;
  display: grid;
  grid-template-columns: 256px 143px 24% 1fr;
  align-items: center;
  background: linear-gradient(to right, #217346 60%, #1e663f 75%, #1f6b42);
  color: #fff;
}

.quick {
  display: flex;
  align-items: center;
  gap: 8px;
  padding-left: 14px;
}

.quick label {
  width: 63px;
  margin-right: -4px;
  white-space: nowrap;
}

.quick button {
  gap: 2px;
}

.quick .off {
  opacity: 0.3;
}

.switch {
  appearance: none;
  width: 25px;
  height: 11px;
  border: 1px solid #fff;
  border-radius: 6px;
  background: radial-gradient(circle at 5px 50%, #fff 3px, transparent 3px);
}

.doc-name {
  gap: 5px;
  padding-right: 12px;
}

.search {
  display: flex;
  align-items: center;
  gap: 9px;
  height: 16px;
  padding-left: 12px;
  background: #9fcdb3;
}

.search input {
  flex: 1;
  min-width: 0;
}

.search input::placeholder {
  color: #217346;
}

.account {
  display: flex;
  align-items: center;
  justify-content: flex-end;
  gap: 22px;
  padding-right: 12px;
}

.account span {
  margin-right: -16px;
}

.account .avatar {
  width: 15px;
  height: 15px;
  margin-right: -4px;
  border-radius: 50%;
  background: #0f78d4;
  font-size: 7px;
  line-height: 15px;
  text-align: center;
}

/* Ribbon tabs */
.menu {
  flex: none;
  display: flex;
  gap: 15px;
  height: 21px;
  padding: 0 9px 0 10px;
  background: #f3f2f1;
  font-size: 9px;
}

.menu button {
  border-bottom: 2px solid transparent;
}

.menu .current {
  border-bottom-color: #217346;
  font-weight: bold;
}

.menu-right {
  display: flex;
  align-items: center;
  gap: 7px;
  margin-left: auto;
}

.menu .pill {
  gap: 3px;
  height: 15px;
  padding: 0 5px;
  border: none;
  border-radius: 2px;
  background: #fff;
  color: #217346;
  font-weight: bold;
}

/* Ribbon */
.ribbon {
  flex: none;
  display: flex;
  padding: 2px 5px 1px 0;
  border-bottom: 1px solid #d2d0ce;
  background: #f3f2f1;
}

.group {
  flex: none;
  display: flex;
  flex-direction: column;
  border-right: 1px solid #d2d0ce;
}

.group-body {
  display: flex;
  height: 50px;
}

.group-foot {
  display: flex;
  justify-content: center;
  position: relative;
  height: 10px;
  font-size: 7px;
}

.launch {
  position: absolute;
  right: 2px;
  top: 2px;
}

.clipboard { width: 72px; }
.font { width: 150px; }
.align { width: 119px; }
.number { width: 100px; }
.styles { width: 179px; }
.cells { width: 73px; }
.editing { width: 129px; }
.privacy { width: 94px; }

.clipboard .group-foot {
  justify-content: flex-start;
  padding-left: 6px;
}

.rows {
  display: flex;
  flex-direction: column;
  gap: 5px;
  padding: 5px 0 0 5px;
}

.row {
  display: flex;
  align-items: center;
  height: 16px;
}

.spread {
  justify-content: space-evenly;
}

.big {
  flex-direction: column;
  justify-content: flex-start;
  padding-top: 1px;
}

.big .chev {
  margin: 3px 0;
}

.big span .chev {
  margin: 0 0 2px;
}

.pic {
  display: flex;
  align-items: center;
  justify-content: center;
  height: 23px;
}

.clipboard .big {
  width: 40px;
  padding-left: 6px;
}

.stack {
  display: flex;
  flex-direction: column;
  gap: 4px;
  padding: 2px 0 0 3px;
}

.stack button {
  justify-content: flex-start;
  gap: 3px;
  height: 12px;
}

.combo {
  display: flex;
  align-items: center;
  height: 16px;
  padding-right: 2px;
  border: 1px solid #c8c6c4;
  background: #fff;
}

.combo select {
  flex: 1;
  min-width: 0;
  appearance: none;
  padding-left: 1px;
}

.combo-font { width: 77px; }
.combo-size { width: 33px; border-left: none; }
.combo-number { width: 90px; }

.ib {
  width: 15px;
  height: 16px;
  font-size: 9px;
}

.ib.on {
  background: #c8c6c4;
}

.grow, .shrink {
  align-items: flex-start;
  padding-top: 3px;
}

.grow {
  width: 18px;
  font-size: 11px;
}

.percent {
  font-size: 12px;
}

.zeros {
  font-size: 7px;
}

.wrap, .decimals {
  flex-direction: column;
  font-size: 7px;
  line-height: 7px;
}

.decimals {
  font-size: 6px;
}

.wrap span, .decimals span {
  display: flex;
}

.drop {
  width: 11px;
  height: 16px;
}

.sep {
  width: 1px;
  height: 14px;
  margin: 0 1px;
  background: #d9d7d5;
}

.tall {
  height: 40px;
  margin: 4px 0 0 2px;
}

.list {
  display: flex;
  flex-direction: column;
  align-items: flex-start;
  padding-left: 6px;
}

.list button {
  gap: 2px;
  height: 16px;
}

.list .far {
  margin-left: 3px;
}

.editing .list {
  padding-left: 7px;
}

.editing .list button {
  gap: 3px;
}

.editing .big {
  margin-left: 3px;
}

.sort span span {
  display: block;
  font-size: 9px;
  line-height: 11px;
}

.sort .blue {
  color: #2f87cf;
}

.collapse {
  align-self: flex-end;
  width: 9px;
  height: 9px;
  margin-left: auto;
}

/* Formula bar */
.formula-bar {
  flex: none;
  display: flex;
  align-items: flex-start;
  height: 118px;
  padding: 5px 3px 7px;
  color: #555;
}

.name-box, .fx {
  display: flex;
  align-items: center;
  height: 17px;
  border: 1px solid #d4d4d4;
  background: #fff;
}

.name-box {
  width: 68px;
  padding: 0 4px 0 3px;
}

.name-box input {
  flex: 1;
  min-width: 0;
}

.grip {
  margin: 4px 9px;
}

.fx {
  width: 73px;
  justify-content: space-around;
}

.fx-btn {
  font-family: "Liberation Serif", serif;
  font-size: 11px;
  font-style: italic;
  font-weight: bold;
}

.formula {
  flex: 1;
  display: flex;
  align-self: stretch;
  margin-left: 1px;
  padding: 3px 3px 3px 6px;
  border: 1px solid #d4d4d4;
  background: #fff;
}

.formula textarea {
  flex: 1;
  resize: none;
}

.formula svg {
  margin-top: 4px;
}

/* Grid */
.sheet {
  flex: 1;
  min-height: 0;
  display: flex;
  padding-right: 1px;
}

.grid-wrap {
  flex: 1;
  overflow: hidden;
  border-right: 1px solid #ababab;
}

.grid {
  width: 100%;
  table-layout: fixed;
  border-collapse: separate;
  border-spacing: 0;
  background: #fff;
  color: #111;
  font-family: Lato, "Noto Sans", sans-serif;
  font-size: 15px;
  line-height: 18px;
}

.col-head { width: 30px; }
.col-a { width: 165px; }
.col-e { width: 157px; }
.col-rest { width: 5px; }

.grid th, .grid td {
  height: 22px;
  padding: 0 2px;
  border-right: 1px solid #dadada;
  border-bottom: 1px solid #dadada;
  white-space: nowrap;
}

.grid th {
  padding: 0;
  border-color: #c3c3c3;
  background: #e6e6e6;
  font-weight: normal;
}

.grid thead th {
  height: 21px;
}

.grid .corner {
  background: linear-gradient(135deg, transparent 50%, #b2b2b2 50%) 11px 3px / 17px 16px no-repeat #e6e6e6;
}

.grid .sel {
  background: #d2d2d2;
  color: #217346;
}

.grid thead .sel {
  border-bottom-color: #217346;
}

.grid tbody .sel {
  background: #dedede;
  border-right-color: #217346;
}

.grid .d {
  border-color: #444;
}

.grid .edge {
  border-right-color: #444;
}

.grid .n {
  text-align: right;
}

.title .d {
  background: #ff0;
  font-weight: bold;
}

.total .d {
  font-weight: bold;
}

.grid .active {
  position: relative;
  border-color: #217346;
}

.active::after {
  content: "";
  position: absolute;
  right: -2px;
  bottom: -2px;
  width: 3px;
  height: 3px;
  background: #217346;
}

.vscroll {
  display: flex;
  flex-direction: column;
  width: 11px;
  margin-left: 2px;
}

.vscroll button, .hscroll button {
  flex: none;
  width: 10px;
  height: 10px;
  border: 1px solid #c6c6c6;
  background: #fff;
}

.vthumb {
  flex: 60;
  width: 10px;
  border: 1px solid #c6c6c6;
  background: #fff;
}

.vtrack {
  flex: 40;
  width: 10px;
  background: #dadada;
}

/* Sheet tabs */
.sheet-bar {
  flex: none;
  display: flex;
  align-items: center;
  height: 16px;
  padding-bottom: 2px;
  border-top: 1px solid #c6c6c6;
  color: #555;
  font-size: 9px;
}

.sheet-nav {
  display: flex;
  align-items: center;
  justify-content: center;
  gap: 12px;
  width: 55px;
  height: 11px;
  padding-right: 6px;
  border-right: 1px solid #b5b5b5;
}

.tab {
  height: 11px;
  padding: 0 6px;
  border-right: 1px solid #b5b5b5;
}

.tab.last {
  border-right: none;
}

.tab.open {
  height: 14px;
  border: none;
  border-bottom: 1px solid #217346;
  background: #fff;
  color: #217346;
  font-weight: bold;
}

.add {
  margin: 2px 0 0 17px;
}

.hscroll {
  display: flex;
  align-items: center;
  gap: 1px;
  width: 40%;
  margin: 2px 0 0 auto;
  padding-right: 13px;
}

.hscroll .dots {
  margin-right: 7px;
}

.hthumb {
  flex: 10;
  height: 10px;
  border: 1px solid #c6c6c6;
  background: #fff;
}

.htrack {
  flex: 1;
  height: 10px;
  margin-left: -1px;
  background: #dadada;
}

/* Status bar */
.status {
  flex: none;
  display: flex;
  align-items: center;
  height: 14px;
  padding: 0 5px;
  background: #f3f2f1;
  color: #555;
  font-size: 7px;
}

.view {
  display: flex;
  margin-left: auto;
}

.view button {
  width: 27px;
  height: 14px;
}

.view .on {
  background: #c8c6c4;
}

.zoom-btn {
  width: 12px;
}

.zoom {
  appearance: none;
  width: 66px;
  height: 10px;
  background: linear-gradient(#b5b5b5, #b5b5b5) 0 50% / 100% 1px no-repeat;
}

.zoom::-webkit-slider-thumb {
  appearance: none;
  width: 4px;
  height: 8px;
  background: #605e5c;
}

.zoom-value {
  margin-left: 5px;
}

/* Taskbar */
.taskbar {
  flex: none;
  display: flex;
  height: 27px;
  background: linear-gradient(to right, #20363f, #20353f 45%, #1b2745);
  color: #fff;
}

.task {
  width: 33px;
  padding: 2px 3px 0;
}

.run {
  background: linear-gradient(#76b4e6, #76b4e6) 50% 100% / 27px 2px no-repeat;
}

.alert {
  border-bottom: 2px solid #f0730f;
  background: #a8672f;
}

.front {
  border-bottom: 2px solid #76b4e6;
  background: #4d626c;
}

.tray {
  display: flex;
  align-items: center;
  gap: 7px;
  margin-left: auto;
  padding-right: 8px;
}

.weather {
  display: flex;
  gap: 6px;
  margin-right: 4px;
  font-size: 9px;
}

.clock {
  display: flex;
  flex-direction: column;
  gap: 2px;
  text-align: center;
}

.notice {
  margin-left: 4px;
}

.badge-text {
  fill: #fff;
  font-size: 8px;
  font-weight: bold;
}

.badge-tiny {
  fill: #fff;
  font-size: 6px;
}

.badge-count {
  fill: #fff;
  font-size: 9px;
}
```
